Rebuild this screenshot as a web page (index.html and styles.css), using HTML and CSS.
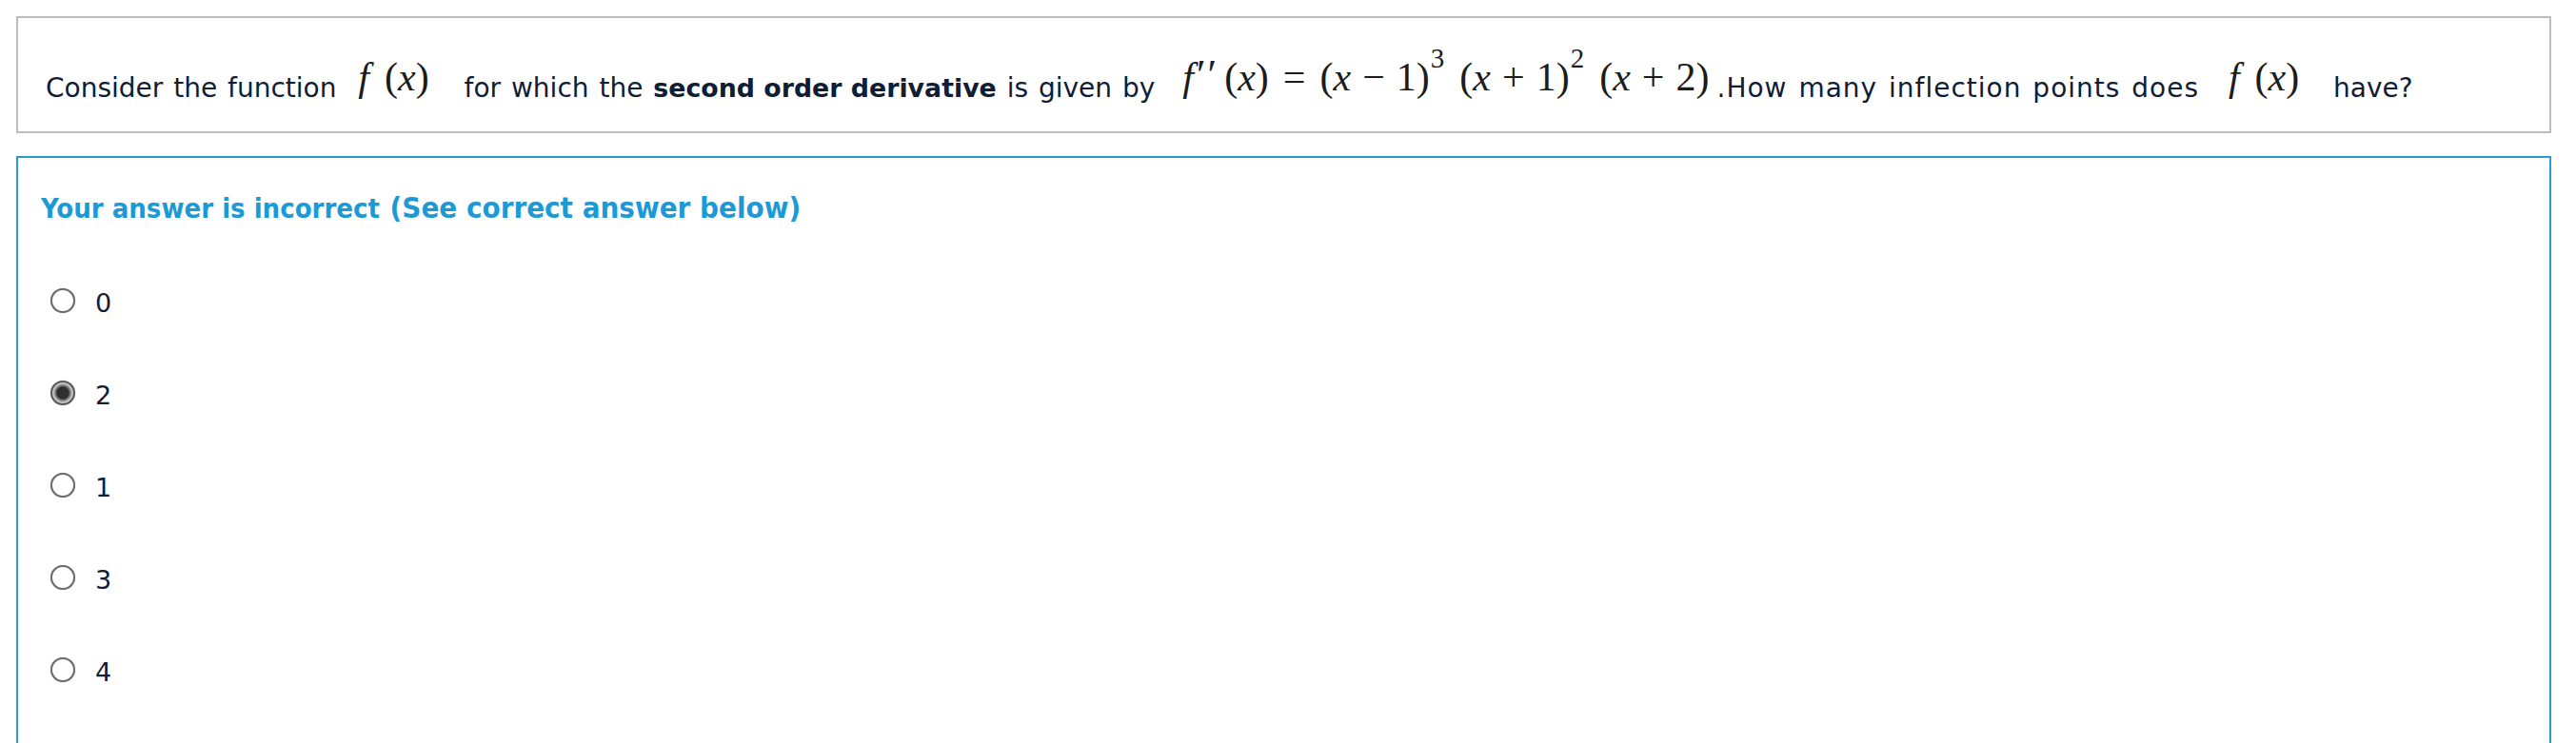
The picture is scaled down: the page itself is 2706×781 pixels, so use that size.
FILE: index.html
```html
<!DOCTYPE html>
<html lang="en">
<head>
<meta charset="utf-8">
<title>Question</title>
<link rel="stylesheet" href="styles.css">
</head>
<body>
<div class="page">
  <div class="question">
    <p class="qtext">Consider the function <span class="math m-first"><i class="fn">f</i><span class="lp">(</span><i>x</i><span class="rp">)</span></span> for which the <b>second order derivative</b> is given by <span class="math m-main"><i class="fn">f</i><span class="prime">′′</span><span class="lp-p">(</span><i>x</i><span class="rp">)</span><span class="rel">=</span><span class="lp0">(</span><i>x</i><span class="bin">−</span>1<span class="rp">)</span><sup>3</sup><span class="lp">(</span><i>x</i><span class="bin">+</span>1<span class="rp">)</span><sup>2</sup><span class="lp">(</span><i>x</i><span class="bin">+</span>2<span class="rp">)</span></span><span class="wide">.How many inflection points does</span> <span class="math m-last"><i class="fn">f</i><span class="lp">(</span><i>x</i><span class="rp">)</span></span> have?</p>
  </div>
  <div class="feedback">
    <div class="status"><span class="s1">Your answer is incorrect</span> <span class="s2">(See correct answer below)</span></div>
    <div class="options">
      <label class="option"><input type="radio" name="ans" class="radio"><span class="val">0</span></label>
      <label class="option"><input type="radio" name="ans" class="radio" checked><span class="val">2</span></label>
      <label class="option"><input type="radio" name="ans" class="radio"><span class="val">1</span></label>
      <label class="option"><input type="radio" name="ans" class="radio"><span class="val">3</span></label>
      <label class="option"><input type="radio" name="ans" class="radio"><span class="val">4</span></label>
    </div>
  </div>
</div>
</body>
</html>
```
FILE: styles.css
```css
html, body {
  margin: 0;
  padding: 0;
  overflow: hidden;
  background: #ffffff;
}

.page {
  padding: 17px 26px 0 17px;
  font-family: "DejaVu Sans", Verdana, sans-serif;
  color: #0f1d35;
}

.question {
  border: 2px solid #bdbdbd;
  padding: 42px 29px 25px 29px;
}

.qtext {
  margin: 0;
  font-size: 28px;
  line-height: 40px;
  white-space: nowrap;
  word-spacing: 2px;
}

.qtext b {
  font-weight: bold;
  font-size: 26.8px;
  word-spacing: 0;
}

.wide {
  letter-spacing: 1px;
}

.math {
  font-family: "Liberation Serif", "Times New Roman", serif;
  font-size: 42px;
  line-height: 40px;
  color: #1c1c1c;
  vertical-align: 7px;
  white-space: nowrap;
  word-spacing: 0;
  letter-spacing: 0;
}

.math i {
  font-style: italic;
}

.fn {
  margin-left: 2px;
}

.m-first {
  margin: 0 26px 0 10px;
}

.m-main {
  margin: 0 8px 0 16px;
}

.m-last {
  margin: 0 25px 0 18px;
}

.lp {
  margin-left: 16px;
}

.lp-p {
  margin-left: 6px;
}

.lp0 {
  margin-left: 0;
}

.prime {
  font-family: "Liberation Serif", "DejaVu Serif", serif;
  font-size: 44px;
  line-height: 0;
  vertical-align: 2px;
  margin-left: 3px;
  letter-spacing: 2px;
}

.rel {
  margin: 0 15px;
}

.bin {
  margin: 0 12px;
}

.math sup {
  font-size: 29px;
  line-height: 0;
  vertical-align: 24px;
  margin-left: 1px;
}

.feedback {
  margin-top: 24px;
  border: 2px solid #2a9bcf;
  border-bottom: none;
  padding: 32px 24px 120px 24px;
}

.status {
  line-height: 40px;
  color: #1c9ad6;
  font-weight: bold;
  white-space: nowrap;
}

.s1 {
  font-family: "DejaVu Sans Condensed", "DejaVu Sans", sans-serif;
  font-stretch: condensed;
  font-size: 29px;
  margin-right: 5px;
}

.s2 {
  font-family: "DejaVu Sans Condensed", "DejaVu Sans", sans-serif;
  font-stretch: condensed;
  font-size: 31px;
}

.options {
  margin-top: 55px;
  display: flex;
  flex-direction: column;
  gap: 57px;
}

.option {
  display: flex;
  align-items: center;
  height: 40px;
  font-size: 27px;
  line-height: 40px;
}

.radio {
  appearance: none;
  -webkit-appearance: none;
  box-sizing: border-box;
  width: 26px;
  height: 26px;
  margin: 0 21px 6px 10px;
  border: 2.5px solid #6b6b6b;
  border-radius: 50%;
  background: #ffffff;
  box-shadow: 0 0 1px rgba(0, 0, 0, 0.35);
}

.radio:checked {
  border-color: #555555;
  background: radial-gradient(circle, #2f2f2f 0 6px, #6f6f6f 7.5px, #c8c8c8 10px);
}

.val {
  color: #0f1d35;
}
```
